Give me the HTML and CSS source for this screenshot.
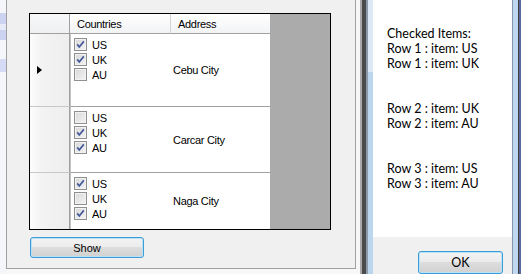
FILE: index.html
```html
<!doctype html>
<html lang="en">
    <head>
        <meta charset="UTF-8" />
        <title>Checked Items</title>
        <link rel="stylesheet" href="styles.css">
    </head>
    <body>
        <div class="screen">
            <div class="glassLeft"></div>
            <div class="mainCol">
                <div class="form">
                    <div class="grid">
                        <div class="corner"></div>
                        <div class="colHead countriesHead">Countries</div>
                        <div class="colHead addressHead">Address</div>
                        <div class="fill"></div>

                        <div class="rowHead"><span class="arrow"></span></div>
                        <div class="cell countries">
                            <div class="item"><span class="cb checked"><svg viewBox="0 0 11 11"><path d="M2.2 5.4 L4.3 8 L8.8 2.4" /></svg></span>US</div>
                            <div class="item"><span class="cb checked"><svg viewBox="0 0 11 11"><path d="M2.2 5.4 L4.3 8 L8.8 2.4" /></svg></span>UK</div>
                            <div class="item"><span class="cb"></span>AU</div>
                        </div>
                        <div class="cell address">Cebu City</div>

                        <div class="rowHead"></div>
                        <div class="cell countries">
                            <div class="item"><span class="cb"></span>US</div>
                            <div class="item"><span class="cb checked"><svg viewBox="0 0 11 11"><path d="M2.2 5.4 L4.3 8 L8.8 2.4" /></svg></span>UK</div>
                            <div class="item"><span class="cb checked"><svg viewBox="0 0 11 11"><path d="M2.2 5.4 L4.3 8 L8.8 2.4" /></svg></span>AU</div>
                        </div>
                        <div class="cell address">Carcar City</div>

                        <div class="rowHead last"></div>
                        <div class="cell countries last">
                            <div class="item"><span class="cb checked"><svg viewBox="0 0 11 11"><path d="M2.2 5.4 L4.3 8 L8.8 2.4" /></svg></span>US</div>
                            <div class="item"><span class="cb"></span>UK</div>
                            <div class="item"><span class="cb checked"><svg viewBox="0 0 11 11"><path d="M2.2 5.4 L4.3 8 L8.8 2.4" /></svg></span>AU</div>
                        </div>
                        <div class="cell address last">Naga City</div>
                    </div>
                    <button class="winButton showButton">Show</button>
                </div>
            </div>
            <div class="splitter"></div>
            <div class="dialog">
                <div class="frameLeft"></div>
                <div class="dialogBody">
                    <div class="output">
                        <div class="group">
                            <div>Checked Items:</div>
                            <div>Row 1 : item: US</div>
                            <div>Row 1 : item: UK</div>
                        </div>
                        <div class="group">
                            <div>Row 2 : item: UK</div>
                            <div>Row 2 : item: AU</div>
                        </div>
                        <div class="group">
                            <div>Row 3 : item: US</div>
                            <div>Row 3 : item: AU</div>
                        </div>
                    </div>
                    <div class="footer">
                        <button class="winButton okButton">OK</button>
                    </div>
                </div>
                <div class="frameRight"></div>
            </div>
        </div>
    </body>
</html>
```

FILE: styles.css
```css
html,
body {
    margin: 0;
    padding: 0;
}
body {
    width: 521px;
    height: 274px;
    overflow: hidden;
    background: #f8f8f8;
    font-family: "Liberation Sans", Arial, sans-serif;
    font-size: 11px;
    color: #000;
}
.screen {
    display: flex;
    height: 274px;
}
.glassLeft {
    width: 6px;
    flex: none;
    background: linear-gradient(
        to bottom,
        #f4f6fa 0 13px,
        #cbd3f1 13px 24px,
        #e7ebf8 24px 30px,
        #cbd3f1 30px 40px,
        #f4f6fa 40px 59px,
        #d5dbf4 59px 72px,
        #f4f6fa 72px
    );
}
.mainCol {
    width: 350px;
    flex: none;
    background: #f8f8f8;
}
.form {
    box-sizing: border-box;
    height: 269px;
    background: #f0f0f0;
    border-left: 1px solid #a0a0a0;
    border-right: 1px solid #a0a0a0;
    border-bottom: 1px solid #a0a0a0;
    padding: 13px 0 0 22px;
}

/* data grid */
.grid {
    box-sizing: border-box;
    width: 302px;
    height: 217px;
    border: 1px solid #000;
    background: #ababab;
    display: grid;
    grid-template-columns: 40px 101px 99px 60px;
    grid-template-rows: 20px 73px 66px 56px;
    overflow: hidden;
    letter-spacing: -0.3px;
}
.corner {
    background: linear-gradient(to bottom, #f7f8fa, #eff0f2);
    border-right: 1px solid #a0a0a0;
    border-bottom: 1px solid #a0a0a0;
}
.colHead {
    background: linear-gradient(to bottom, #ffffff, #f2f3f5);
    border-bottom: 1px solid #a0a0a0;
    display: flex;
    align-items: center;
    padding-top: 1px;
}
.countriesHead {
    padding-left: 7px;
    border-right: 1px solid #d5d5d5;
}
.addressHead {
    padding-left: 7px;
}
.fill {
    grid-column: 4;
    grid-row: 1 / span 4;
}
.rowHead {
    background: linear-gradient(to right, #fdfdfd 0, #f3f3f3 30%, #eeeeee 100%);
    border-right: 1px solid #a0a0a0;
    border-bottom: 1px solid #c8c8c8;
    display: flex;
    align-items: center;
    padding-left: 7px;
}
.arrow {
    width: 0;
    height: 0;
    border-left: 5px solid #000;
    border-top: 4.5px solid transparent;
    border-bottom: 4.5px solid transparent;
}
.cell {
    background: #fff;
    border-bottom: 1px solid #a0a0a0;
}
.cell.last,
.rowHead.last {
    border-bottom: none;
}
.countries {
    border-left: 1px solid #c4c4c4;
    padding: 3px 0 0 3px;
}
.address {
    display: flex;
    align-items: center;
    padding-left: 2px;
}
.item {
    height: 15px;
    display: flex;
    align-items: center;
}
.cb {
    box-sizing: border-box;
    width: 13px;
    height: 13px;
    margin-right: 5px;
    border: 1px solid #8e8f8f;
    background: linear-gradient(135deg, #d8d8d8, #f4f4f4);
    box-shadow: inset 0 0 0 1px #f2f2f2;
}
.cb svg {
    display: block;
    width: 11px;
    height: 11px;
}
.cb path {
    fill: none;
    stroke: #41599a;
    stroke-width: 1.7;
}

/* buttons */
.winButton {
    box-sizing: border-box;
    font-family: "Liberation Sans", Arial, sans-serif;
    font-size: 11px;
    color: #000;
    padding: 0;
    border: 1px solid #3d9bd8;
    border-radius: 3px;
    background: linear-gradient(to bottom, #f3f3f3 0, #ebebeb 50%, #dddddd 50%, #d1d1d1 100%);
    box-shadow: inset 0 0 0 1px #b9e2f7;
}
.showButton {
    display: block;
    width: 114px;
    height: 21px;
    margin: 7px 0 0 1px;
}

.splitter {
    width: 12px;
    flex: none;
    background: linear-gradient(
        to right,
        #f6f6f6 0 4px,
        #a9a9a9 4px 6px,
        #4b4b4b 6px 10px,
        #8c99a6 10px 12px
    );
}

/* message dialog */
.dialog {
    display: flex;
    flex: 1;
}
.frameLeft {
    width: 5px;
    background: linear-gradient(to bottom, #dde9f6 0 72px, #bdd6ef 72px);
}
.dialogBody {
    width: 139px;
    flex: none;
    display: flex;
    flex-direction: column;
    background: #fff;
}
.frameRight {
    flex: 1;
    background: linear-gradient(
        to right,
        #8796a6 0 1px,
        #bfd7f0 1px 6px,
        #3f3f3f 6px 7px,
        #5a6a9a 7px
    );
}
.output {
    height: 247px;
    box-sizing: border-box;
    padding: 26px 0 0 14px;
    font-family: Lato, "Noto Sans", sans-serif;
    font-size: 12.5px;
    line-height: 15px;
    color: #000;
}
.group + .group {
    margin-top: 30px;
}
.footer {
    flex: 1;
    background: #f0f0f0;
    padding: 14px 0 0 45px;
}
.okButton {
    width: 85px;
    height: 23px;
    font-family: Lato, "Noto Sans", sans-serif;
    font-size: 12.5px;
}
```
